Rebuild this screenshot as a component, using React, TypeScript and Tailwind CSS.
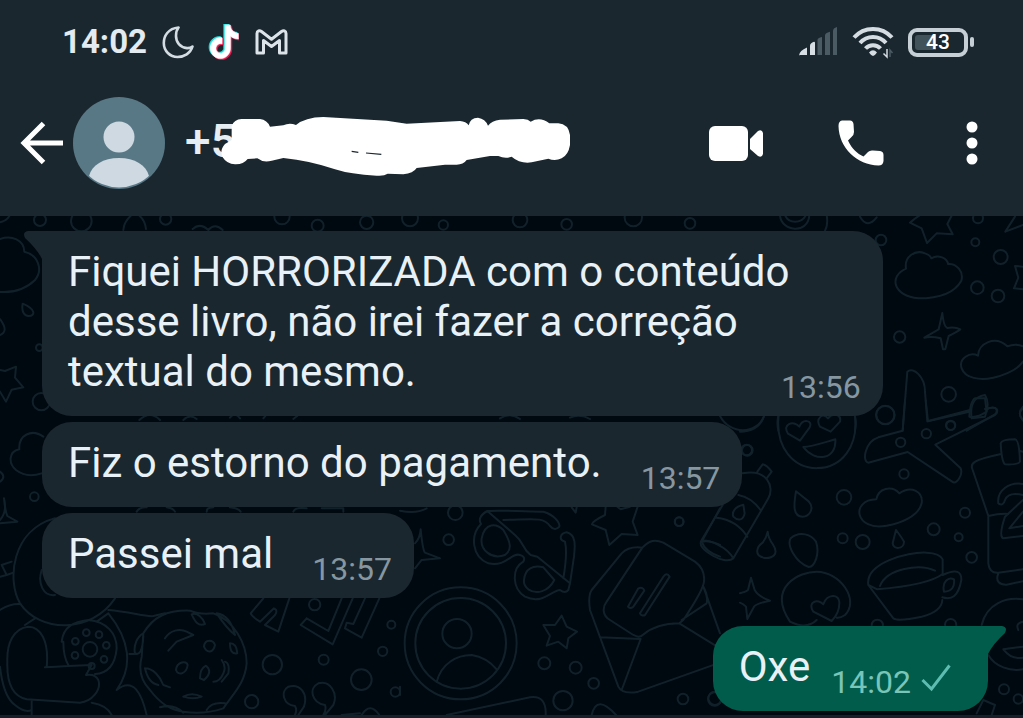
import React from "react";

const TIKTOK =
  "M12.525.02c1.31-.02 2.61-.01 3.91-.02.08 1.53.63 3.09 1.75 4.17 1.12 1.11 2.7 1.62 4.24 1.79v4.03c-1.44-.05-2.89-.35-4.2-.97-.57-.26-1.1-.59-1.62-.93-.01 2.92.01 5.84-.02 8.75-.08 1.4-.54 2.79-1.35 3.94-1.31 1.92-3.58 3.17-5.91 3.21-1.43.08-2.86-.31-4.08-1.03-2.02-1.19-3.44-3.37-3.65-5.71-.02-.5-.03-1-.01-1.49.18-1.9 1.12-3.72 2.58-4.96 1.66-1.44 3.98-2.13 6.15-1.72.02 1.48-.04 2.96-.04 4.44-.99-.32-2.15-.23-3.02.37-.63.41-1.11 1.04-1.36 1.75-.21.51-.15 1.07-.14 1.61.24 1.64 1.82 3.02 3.5 2.87 1.12-.01 2.19-.66 2.77-1.61.19-.33.4-.67.41-1.06.1-1.79.06-3.57.07-5.36.01-4.03-.01-8.05.02-12.07z";

function Dots({ items }: { items: number[][] }) {
  return (
    <>
      {items.map(([x, y, r], i) => (
        <circle key={i} cx={x} cy={y} r={r} />
      ))}
    </>
  );
}

/* Doodle pattern behind the conversation. Each group is drawn at three times its size. */
function Wallpaper() {
  return (
    <svg
      aria-hidden="true"
      className="absolute inset-0 h-full w-full"
      viewBox="0 216 1023 499"
      preserveAspectRatio="xMidYMin slice"
      fill="none"
      stroke="#11212a"
      strokeWidth="6"
      strokeLinejoin="round"
      strokeLinecap="round"
    >
      {/* top left */}
      <g transform="translate(0 215) scale(.33333)">
        <Dots items={[[120, 15, 18], [244, 18, 31], [497, 12, 17], [846, 5, 23], [953, 32, 18], [124, 560, 26], [118, 398, 10], [1100, 22, 20], [1230, 10, 24], [1330, 30, 14], [1560, 15, 22], [1700, 28, 16], [1900, 8, 26], [2070, 25, 16]]} />
        <path d="M0 22Q20 18 30 0M370 45Q372 15 405-8Q435 10 438 42M578 42Q600 22 625 45Q645 22 668 45M0 72C35 60 72 75 73 110C115 120 130 165 105 195C75 225 35 233 0 231M68 266C64 290 72 303 86 303C108 302 106 282 68 266M0 312Q28 350 0 360M0 465L15 468L48 455L45 488L70 517L35 524L18 560L0 530" />
        <path d="M418 615Q450 585 480 615M550 615Q570 596 590 612M690 608Q705 590 720 610M790 610L800 598M880 612L895 600M1500 610Q1530 590 1560 612M1710 608Q1740 594 1770 612" />
      </g>

      {/* top right: star, clouds, sparkle */}
      <g transform="translate(760 210) scale(.33333)">
        <Dots items={[[363, 90, 16], [654, 25, 15], [646, 97, 12], [722, 141, 21], [652, 233, 19], [714, 258, 19], [419, 381, 17], [566, 553, 22], [376, 615, 27], [572, 647, 13]]} />
        <path d="M60 15C62 65 145 75 148 15M75 15C85 42 125 42 138 15M200 15Q205 45 195 62M300 20Q322 58 350 22M450 38Q470 20 490 10M450 38L485 55L501 99L530 70L578 73L562 42L576 15M736 65L765 20M736 65L789 45M438 176C432 140 465 118 495 130Q510 135 514 145C535 132 562 145 564 162C590 160 612 185 604 212C580 255 530 265 475 265C400 258 385 200 438 176ZM789 170L765 168L775 203L762 235L789 238" />
        <path d="M547 309C550 342 557 352 562 354Q585 350 601 358Q590 366 566 378L556 418L549 418L542 385Q515 378 493 383Q515 370 536 358ZM654 437C655 400 705 375 742 409C765 400 780 405 789 409M654 437C630 425 595 445 605 475C615 505 660 512 700 503C745 492 775 475 789 455" />
        <path d="M428 662L442 485C460 470 495 500 495 545L502 634L630 600M635 625C630 590 640 560 675 555C690 580 680 600 675 620ZM675 597Q720 585 710 610L620 662M789 590Q770 610 789 632M55 618Q50 640 55 662M285 618Q290 640 285 662" />
      </g>

      {/* right: emoji, plane, cloud, cup, calendar */}
      <g transform="translate(740 400) scale(.33333)">
        <Dots items={[[436, 45, 28], [482, 127, 14], [559, 101, 14], [632, 76, 14], [492, 222, 14], [312, 292, 22], [308, 415, 15], [368, 426, 21], [581, 388, 18], [675, 338, 15], [656, 412, 12], [695, 472, 16], [22, 151, 16], [412, 676, 17], [632, 674, 17]]} />
        <path d="M118 30C80 265 385 260 342 30M180 122L144 101C125 72 160 60 178 80C188 55 220 60 209 82ZM272 95L240 80C225 55 250 35 264 55C280 35 305 45 300 65ZM190 141C215 140 250 128 286 118C290 180 225 188 190 141ZM0 95Q55 95 72 50M495 0L488 92L415 112C375 125 365 185 385 188L503 156L640 247C650 250 670 225 662 205L586 134L765 45C780 25 760 15 738 30M557 0L564 64L688 35M688 50C690 20 695 0 705-5L735-5L740 35Q710 55 688 50M849 25Q830 40 849 60" />
        <path d="M168 274Q190 292 206 304C225 325 208 350 188 350C160 350 160 320 168 274ZM83 395Q85 415 98 432C120 465 95 475 75 474C40 468 50 440 68 428Q80 412 83 395ZM468 390Q485 412 492 425C492 448 460 450 458 430ZM409 298C415 265 455 255 478 280C515 255 550 275 545 310C535 350 480 370 440 377C345 395 330 300 409 298ZM206 501C165 485 140 435 152 415C180 390 215 405 228 425C240 460 225 500 206 501ZM150 665C80 560 180 515 230 515C300 515 360 600 315 645Q300 655 290 653M150 665Q200 690 230 660M275 663L220 635C200 605 235 595 250 613C260 580 300 580 298 610C298 630 290 648 275 663Z" />
        <path d="M385 555C375 490 500 455 560 458Q600 460 608 478L608 522Q565 555 412 568ZM385 555L460 655Q475 665 545 650Q605 635 607 600M420 558C440 505 540 490 585 512M608 525C650 505 665 515 664 540C655 590 635 600 607 592M612 575C605 545 625 530 642 538C645 560 635 575 612 575M697 207C690 190 700 180 780 163M782 130Q785 118 825 118Q838 120 840 185Q835 195 795 193Q785 185 782 130ZM849 155L840 153M697 207L745 348Q780 340 805 342M745 348L745 490Q748 520 775 518L849 508M775 520C765 545 780 555 800 554L849 544M775 310C770 270 810 245 849 252M775 310Q790 320 795 300Q805 275 849 285M849 300L795 350Q775 410 790 415L849 408M849 335L808 385L849 378M0 580Q20 575 24 570L33 533L44 570Q55 590 90 602Q50 610 42 620L22 657L18 620Q10 612 0 608M725 675C740 610 800 590 849 598" />
      </g>

      {/* bottle */}
      <g transform="translate(660 410) scale(.33333)">
        <Dots items={[[57, 335, 13], [260, 120, 16]]} />
        <path d="M180 18C210 75 290 75 312 18M248 190C320 175 345 230 325 265L220 445C210 455 185 452 160 438C130 420 115 405 125 390L188 285M292 185L308 163Q320 165 335 185L320 205M235 255Q275 262 303 302M170 323Q230 330 262 380M125 392C150 390 200 410 220 445M250 284C225 290 215 305 220 320C235 335 250 330 254 310Z" />
      </g>

      {/* centre: glasses, person, letter */}
      <g transform="translate(400 480) scale(.33333)">
        <Dots items={[[166, 98, 22], [146, 179, 16], [171, 461, 44], [182, 490, 168], [182, 490, 136], [433, 550, 18], [527, 563, 18], [581, 610, 16], [489, 662, 29], [838, 125, 13], [849, 657, 16], [944, 657, 20]]} />
        <path d="M110 605C125 550 170 525 215 525Q260 532 290 568M0 92Q50 102 80 85M45 190Q60 175 62 148Q68 210 75 218L120 235L65 240L45 265M262 93C240 105 235 120 243 132C210 165 215 230 265 250C320 262 335 215 360 225Q378 230 370 245C335 265 335 325 375 350C430 375 455 330 480 330Q495 342 505 330L510 310L412 230L392 225C365 205 375 190 345 165ZM262 93C300 90 390 95 430 95C465 105 480 130 478 140Q465 155 450 138C430 110 400 118 310 120M490 295Q503 220 495 185C475 180 480 160 500 157C530 165 525 200 522 230L510 310M245 175C255 125 290 130 310 150C335 190 335 210 315 225C275 240 240 210 245 175ZM372 300C375 265 400 255 430 262L463 300C445 335 410 345 385 328Q370 315 372 300M515 82L527 98L530 82" />
        <path d="M617 80L615 105Q575 125 576 133L617 150L628 195L665 162L713 165L698 125L713 80M652 80L662 88L690 80M485 407L500 440L531 455L505 475L500 505L475 485L440 497L450 468L430 435L465 435ZM727 203C690 198 675 210 665 220L575 330C565 345 567 370 570 390L655 620C665 640 690 640 715 635L960 548M727 203C750 180 765 178 790 188L885 245C905 260 915 280 912 305Q910 330 850 420L838 430Q770 430 728 465Q718 475 700 465L630 420C605 405 608 380 620 365L727 203M600 472L722 477L665 630M838 430L960 505M845 420L920 370Q925 345 910 320L960 460M684 380L715 325Q730 320 733 332L700 380Q690 388 684 380ZM720 400L790 290Q800 275 809 290L735 405Q725 410 720 400ZM905 185L960 85M905 185Q915 215 960 230M905 185Q930 180 960 195M140 705L390 652Q440 645 437 705M575 705Q590 640 648 705M0 620V645" />
      </g>

      {/* bottom left: figure with cookie, asteroid, quotes */}
      <g transform="translate(0 480) scale(.33333)">
        <Dots items={[[103, 50, 13], [270, 508, 22], [259, 458, 10], [297, 464, 10], [319, 496, 10], [312, 538, 10], [226, 484, 10], [225, 526, 10], [275, 558, 9], [817, 554, 29], [944, 374, 17], [971, 539, 15], [1174, 434, 12], [1148, 514, 14], [1084, 599, 31], [1186, 636, 14], [755, 665, 20]]} />
        <path d="M0 120Q22 95 12 55Q15 90 22 108L52 125L0 130M165 115C35 150 20 300 60 370C120 460 275 460 345 355M125 270C112 310 130 350 165 345M0 290L20 285L5 255L35 245M20 285L40 278M0 390Q30 370 62 372M75 435L105 415M325 390C390 395 440 412 460 408L495 400M140 562C148 480 120 440 85 440C40 445 20 490 22 545C20 610 40 650 80 658L240 668C275 665 305 630 295 600Q285 580 258 585L275 555L205 558Q165 560 135 562M185 485C190 440 220 425 265 420C320 425 350 460 350 505C345 560 320 580 285 582M190 485Q190 530 205 555M290 425L325 400C390 480 400 560 350 630M0 560Q10 650 45 675Q75 700 95 690M95 662V705M275 668Q320 675 335 705M350 630C400 590 425 640 440 705M388 522H410" />
        <path d="M430 460C460 410 500 390 570 392Q600 405 640 400C700 420 740 490 740 550C735 610 700 640 670 685Q610 705 550 695C500 690 465 650 450 630Q410 590 425 530ZM430 460C410 470 400 500 405 520C425 530 430 490 430 460ZM575 403C590 395 610 415 615 432C595 440 585 425 575 403ZM650 400Q690 405 705 465Q680 445 650 400M495 475C510 450 540 445 560 455L580 465L530 485L505 512M612 500C615 475 640 480 645 495C640 520 620 520 612 500ZM690 490Q710 490 712 520Q690 525 690 490M528 570C530 545 560 540 563 555C560 580 535 590 528 570ZM600 595Q600 565 618 557Q640 575 612 600ZM665 540Q680 560 670 580Q660 605 640 605M675 545Q690 550 685 580L665 605M435 565C460 565 480 590 490 615L510 622M435 565Q445 610 475 615M550 650Q575 635 605 650Q580 660 550 650M480 682Q520 670 550 698M620 690Q635 665 675 670M410 95Q420 80 440 82M500 82Q520 85 525 95M620 95Q620 82 640 82M690 82Q715 85 722 95M880 95Q885 80 920 85M965 85L1030 85V95" />
        <path d="M790 355L752 400Q755 410 780 425L822 385Q835 390 825 405L795 435L835 455L868 355M920 415L985 453L1025 355M920 415L902 435L998 493L1058 355M1095 355L1060 432L1040 428L1035 445L1085 473L1138 355M885 705Q892 690 885 678C850 675 840 635 865 620C900 610 925 640 912 680L895 705M970 705Q980 690 975 675C935 668 925 625 955 610C990 600 1015 640 1000 675L975 705M1085 705Q1110 665 1138 705M1025 705L1080 700" />
      </g>

      {/* left cloud */}
      <g transform="translate(0 400) scale(.33333)">
        <path d="M130 110C95 85 55 105 58 148C25 155 25 190 48 210Q80 235 125 220M0 215Q20 230 0 245" />
      </g>

      {/* bottom right face */}
      <g transform="translate(690 560) scale(.33333)">
        <Dots items={[[942, 388, 15], [985, 417, 14], [75, 415, 20]]} />
        <path d="M895 285C915 320 960 335 999 328M940 268Q965 300 999 293M940 268L999 260M999 185Q975 190 985 210M880 420L915 435L905 465M860 460L880 420" />
      </g>
    </svg>
  );
}

function StatusBar() {
  return (
    <div className="flex h-9 items-center justify-between pl-[62px] pr-[49px] text-[#e3eaf0]">
      <div className="flex items-center">
        <span className="mr-[15px] text-[33px] font-bold leading-9">14:02</span>
        <svg aria-label="Não perturbe" className="mr-3.5 h-9 w-8" viewBox="0 0 32 36" fill="none" stroke="#d3dce3" strokeWidth="2.6" strokeLinejoin="round">
          <path d="M16.5 3.5C6 4.500 1.800 12 1.800 19C1.800 27 8 33 15.500 33C22 33 28.500 29.500 30.500 22.500C29 23.800 27 24.200 25 24.100C18 23.500 14 18 14 12C14 9 14.500 6 16.500 3.500Z" />
        </svg>
        <svg aria-label="TikTok" className="mr-4 h-9 w-[31px]" viewBox="0 0 31 36">
          <g transform="translate(-1 0) scale(1.34 1.4)" fill="#22e6e2" stroke="#22e6e2" strokeWidth=".5"><path d={TIKTOK} /></g>
          <g transform="translate(1.500 2) scale(1.34 1.4)" fill="#ee1d52" stroke="#ee1d52" strokeWidth=".5"><path d={TIKTOK} /></g>
          <g transform="translate(.300 1) scale(1.34 1.4)" fill="#fff" stroke="#fff" strokeWidth=".4"><path d={TIKTOK} /></g>
        </svg>
        <svg aria-label="Gmail" className="h-[26px] w-[33px]" viewBox="0 0 33 26" fill="none" stroke="#dce3e9" strokeWidth="3" strokeLinejoin="round">
          <path d="M2 24V4.500C2 1.500 4.500 1 6.500 2.500L16.500 10.200L26.500 2.500C28.500 1 31 1.500 31 4.500V24H24.500V11.500L16.500 17.500L8.500 11.500V24Z" />
        </svg>
      </div>

      <div className="flex items-center">
        <svg aria-label="Sinal" className="mr-3.5 h-[30px] w-10" viewBox="0 0 40 30">
          <path d="M1 28.500Q1.500 23.500 9 20.500V28H2Z" fill="#d7dfe5" />
          <path d="M12 18.500Q12 16.500 16 14.800Q17 14.700 17 16V28H12Z" fill="#d7dfe5" />
          <path d="M19.500 13Q19.500 11 24 10V28H19.500ZM27 8.500Q27 6 32 4.800V28H27ZM35 4Q35 1 39 0V28H35Z" fill="#4b5b63" />
        </svg>
        <svg aria-label="Wi-Fi" className="mr-3.5 h-[34px] w-[42px]" viewBox="0 0 42 34" fill="none" stroke="#d5dce2" strokeWidth="4">
          <path d="M2 12.500C12 1 30 1 40 12.500M8 18C15 10 27 10 34 18M13.500 23.500C17.500 19 24.500 19 28.500 23.500" />
          <path d="M17 27.500Q21 23 25 27.500Q23 30.500 21 31Q19 30.500 17 27.500Z" fill="#d5dce2" stroke="none" />
          <path d="M35 24V32L31.500 28.500" strokeWidth="1.500" />
          <path d="M38 32V25L40.500 28" stroke="#4b5b63" strokeWidth="1.500" />
        </svg>
        <div className="flex items-center gap-0.5">
          <div className="relative flex h-[29px] w-[60px] items-center justify-center rounded-[9px] border-4 border-[#c6cfd6]">
            <span className="absolute bottom-[3px] left-[3px] top-[3px] w-[21px] rounded-l-[3px] bg-[#42525a]" />
            <span className="relative text-[21px] font-medium leading-6 text-white">43</span>
          </div>
          <span className="h-2.5 w-1 rounded-[2px] bg-[#c6cfd6]" />
        </div>
      </div>
    </div>
  );
}

function AppBar() {
  return (
    <div className="flex h-[92px] items-center pl-5 pr-10 text-white">
      <button aria-label="Voltar" className="mr-2.5 shrink-0">
        <svg className="h-11 w-[43px]" viewBox="0 0 43 44" fill="none" stroke="currentColor" strokeWidth="5">
          <path d="M43 22H5M23.500 2.500L4 22L23.500 41.500" />
        </svg>
      </button>
      <svg aria-label="Foto do contato" className="h-[92px] w-[92px] shrink-0" viewBox="0 0 92 92">
        <defs>
          <clipPath id="face"><circle cx="46" cy="46" r="44.500" /></clipPath>
        </defs>
        <circle cx="46" cy="46" r="46" fill="#587886" />
        <circle cx="46" cy="40" r="15.500" fill="#ced9e1" />
        <path d="M16 79C19 68 30 61 46 61C62 61 73 68 76 79L70 92H22Z" fill="#ced9e1" clipPath="url(#face)" />
      </svg>
      <div className="relative ml-5 h-[58px] w-[386px] shrink-0">
        <h1 className="text-[46px] font-medium leading-[54px] text-[#e6edf3]">+5</h1>
        <svg aria-hidden="true" className="absolute -top-6 left-[-5px] h-[130px] w-[400px]" viewBox="0 0 1200 390">
          <path fill="#fff" d="M155 108Q162 88 185 87H240Q262 90 270 110L310 106Q328 97 348 105Q375 82 430 81L620 92L680 101L840 93Q858 94 866 106Q870 84 894 83Q916 86 924 107Q935 92 960 89L1030 87Q1045 88 1052 95Q1080 78 1108 100H1135Q1165 102 1170 135V165Q1165 195 1145 205Q1125 215 1105 206L1055 217Q1020 222 995 200Q975 207 955 198H930L860 210Q850 224 830 224H795L710 234Q700 250 670 253L623 251Q612 259 590 257Q510 253 465 238Q390 212 310 204L275 212Q250 219 232 205L203 207Q190 224 165 223Q140 222 128 202Q118 180 135 162L155 150Z" />
          <path d="M515 184L535 187M558 189L604 193" stroke="#1a272f" strokeWidth="3.500" fill="none" />
        </svg>
      </div>
      <div className="ml-auto flex items-center">
        <button aria-label="Chamada de vídeo" className="mr-[75px]">
          <svg className="h-9 w-[54px]" viewBox="0 0 54 36" fill="currentColor">
            <rect x="0" y="1" width="39" height="35" rx="6" />
            <path d="M41 14L49 6Q53 4 54 8V29Q53 33 49 31L41 24Z" />
          </svg>
        </button>
        <button aria-label="Chamada de voz" className="mr-[77px]">
          <svg className="h-[46px] w-[46px]" viewBox="0 0 46 46" fill="currentColor">
            <path d="M4 .5H12Q15 .5 15.500 4L16 12Q16 15 13.500 17L10 20.500C14 29 19 33.500 25.500 36.500L30 32Q32 30 35 30.500L42 31Q45.500 31.500 45.500 35V41Q45 45.500 40.500 45.500C19 45 1 28 .5 6Q.5 1 4 .5Z" />
          </svg>
        </button>
        <button aria-label="Mais opções" className="w-[22px]">
          <svg className="mx-auto h-11 w-3" viewBox="0 0 12 44" fill="currentColor">
            <circle cx="6" cy="6" r="5.500" /><circle cx="6" cy="22" r="5.500" /><circle cx="6" cy="38" r="5.500" />
          </svg>
        </button>
      </div>
    </div>
  );
}

type Message = { text: string; time: string };

const received: Message[] = [
  { text: "Fiquei HORRORIZADA com o conteúdo desse livro, não irei fazer a correção textual do mesmo.", time: "13:56" },
  { text: "Fiz o estorno do pagamento.", time: "13:57" },
  { text: "Passei mal", time: "13:57" },
];

function Received({ text, time, first }: Message & { first: boolean }) {
  return (
    <li className={"relative flex w-fit items-end rounded-[30px] bg-[#1a272f] pb-[19px] pl-[26px] pr-[22px] pt-4 " + (first ? "rounded-tl-none" : "")}>
      {first && (
        <svg aria-hidden="true" className="absolute -left-[19px] top-0 h-8 w-5" viewBox="0 0 20 32" fill="#1a272f">
          <path d="M20 0H5Q-1 1 2 7Q14 18 19 28V32H20Z" />
        </svg>
      )}
      <p className="max-w-[730px] text-[42px] leading-[50px] text-[#e9f1f8]">{text}</p>
      <time className={"-mb-2 text-[32px] leading-9 text-[#8697a1] " + (first ? "-ml-[17px]" : "ml-[39px]")}>{time}</time>
    </li>
  );
}

export default function App() {
  return (
    <main className="flex min-h-screen flex-col bg-[#000810] font-['Roboto',sans-serif]">
      <header className="flex flex-col gap-[37px] bg-[#1a272f] pb-[27px] pt-6">
        <StatusBar />
        <AppBar />
      </header>
      <section aria-label="Conversa" className="relative grow overflow-hidden">
        <Wallpaper />
        <ul className="relative flex flex-col gap-1.5 pb-1 pl-[42px] pr-[35px] pt-[15px]">
          {received.map((m, i) => (
            <Received key={m.text} {...m} first={i === 0} />
          ))}
          <li className="relative mt-[22px] flex w-fit items-end self-end rounded-[30px] rounded-tr-none bg-[#025c4b] pb-[19px] pl-[26px] pr-[37px] pt-4">
            <svg aria-hidden="true" className="absolute -right-[19px] top-0 h-8 w-5" viewBox="0 0 20 32" fill="#025c4b">
              <path d="M0 0H15Q21 1 18 7Q6 18 1 28V32H0Z" />
            </svg>
            <p className="text-[42px] leading-[50px] text-[#e9f1f8]">Oxe</p>
            <time className="-mb-2 ml-[21px] text-[32px] leading-9 text-[#78c5b9]">14:02</time>
            <svg aria-label="Enviada" className="ml-2.5 h-7 w-[30px]" viewBox="0 0 30 28" fill="none" stroke="#5dbdb0" strokeWidth="3">
              <path d="M1.500 16L10.500 25L28.500 1.500" />
            </svg>
          </li>
        </ul>
      </section>
      <div className="h-[3px] bg-[#14212a]" />
    </main>
  );
}
